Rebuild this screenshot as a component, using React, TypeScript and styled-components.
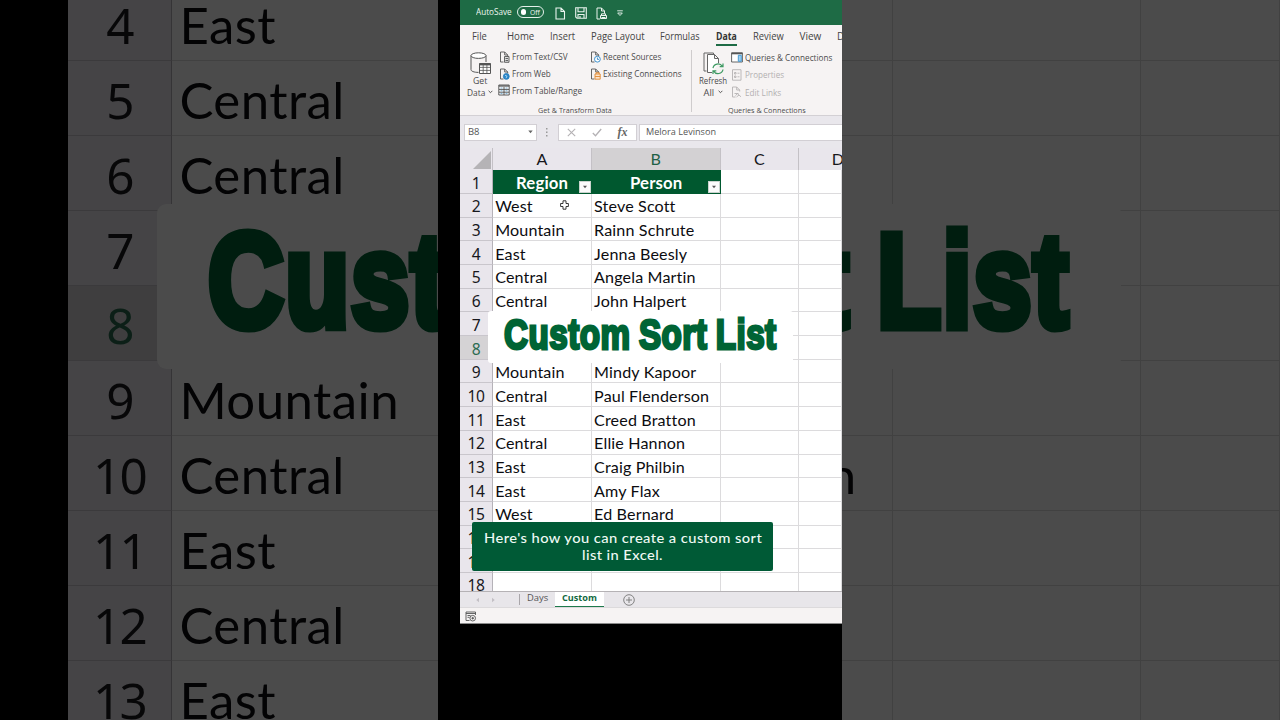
import React, { useLayoutEffect, useRef, useState } from "react";
import styled, { createGlobalStyle, css } from "styled-components";

const GlobalStyle = createGlobalStyle`
  * { box-sizing: border-box; }
  html, body { margin: 0; padding: 0; background: #000; overflow: hidden; }
  svg { display: block; flex: none; }
`;

const UI = `"Open Sans", "Noto Sans", sans-serif`;
const SHEET = `Lato, "Open Sans", sans-serif`;

/* ---------- text fitted to a given width ---------- */

const FitBox = styled.span<{ $w: number }>`
  display: inline-block;
  flex: none;
  width: ${(p) => p.$w}px;
  white-space: nowrap;
  text-align: left;
`;
const FitInner = styled.span`
  display: inline-block;
  transform-origin: 0 50%;
`;

function Fit({ w, children }: { w: number; children: React.ReactNode }) {
  const ref = useRef<HTMLSpanElement>(null);
  const [scale, setScale] = useState(1);
  useLayoutEffect(() => {
    if (ref.current) setScale(w / ref.current.offsetWidth);
  }, [w]);
  return (
    <FitBox $w={w}>
      <FitInner ref={ref} style={{ transform: `scaleX(${scale})` }}>
        {children}
      </FitInner>
    </FitBox>
  );
}

/* ---------- stage ---------- */

const Stage = styled.div`
  display: grid;
  grid-template-columns: 68px 370px 404px 438px;
  grid-template-rows: 720px;
  width: 1280px;
  height: 720px;
  overflow: hidden;
  background: #000;
`;
const Backdrop = styled.div`
  grid-column: 2 / 5;
  grid-row: 1;
  position: relative;
  overflow: hidden;
  opacity: 0.295;
  background: #fff;
`;
const BackdropShift = styled.div`
  margin-top: -14.5px;
`;
const Video = styled.div`
  grid-column: 3;
  grid-row: 1;
  z-index: 1;
  overflow: hidden;
  background: #000;
  padding-left: 22px;
`;
const AppWindow = styled.div`
  position: relative;
  display: flex;
  flex-direction: column;
  width: 382px;
  height: 624px;
  overflow: hidden;
  background: #f6f3f3;
  border-bottom: 1px solid #8a8a8a;
`;

/* ---------- worksheet ---------- */

const Rows = styled.div<{ $k: number }>`
  font-family: ${SHEET};
  font-size: ${(p) => 16.1 * p.$k}px;
  line-height: ${(p) => 22.2 * p.$k}px;
  letter-spacing: 0.009em;
  font-variant-ligatures: none;
  color: #0c0c10;
`;
const Row = styled.div<{ $k: number }>`
  display: grid;
  grid-template-columns: ${(p) => [32.9, 98.9, 128.8, 78.5].map((n) => `${n * p.$k}px`).join(" ")} 1fr;
  grid-template-rows: 100%;
  height: ${(p) => 23.7 * p.$k}px;
  > * { padding-top: ${(p) => 1.4 * p.$k}px; }
`;
const RowHead = styled.div<{ $active: boolean }>`
  text-align: center;
  font-family: "Noto Sans", sans-serif;
  font-size: 0.97em;
  letter-spacing: -0.035em;
  background: ${(p) => (p.$active ? "#d5d3d5" : "#e9e6ec")};
  color: ${(p) => (p.$active ? "#2b6b50" : "#18181c")};
  border-right: 1px solid #b5b2b8;
  border-bottom: 1px solid #c9c6cc;
`;
const Cell = styled.div<{ $k: number }>`
  position: relative;
  padding-left: ${(p) => 2.3 * p.$k}px;
  white-space: nowrap;
  background: #fff;
  border-right: 1px solid #dcdbdd;
  border-bottom: 1px solid #dcdbdd;
`;
const HeadCell = styled(Cell)`
  padding-left: 0;
  text-align: center;
  background: #00582f;
  color: #fff;
  font-weight: 700;
  border-color: #00582f;
`;
const FilterButton = styled.span`
  position: absolute;
  right: 0;
  bottom: 0;
  display: flex;
  align-items: center;
  justify-content: center;
  width: 12px;
  height: 12px;
  background: #fbfbfb;
  border: 1px solid #c9d3cd;
`;

const TitleCard = styled.div<{ $k: number; $top: number }>`
  position: absolute;
  left: ${(p) => 28 * p.$k}px;
  top: ${(p) => p.$top}px;
  width: ${(p) => 305 * p.$k}px;
  height: ${(p) => 52.2 * p.$k}px;
  padding-left: ${(p) => 16.4 * p.$k}px;
  background: #fff;
  border-radius: ${(p) => 3 * p.$k}px;
  color: #006435;
  font-family: "Liberation Sans", Arial, sans-serif;
  font-weight: 700;
  letter-spacing: 0.015em;
  word-spacing: -0.04em;
  font-size: ${(p) => 42.5 * p.$k}px;
  line-height: ${(p) => 48.5 * p.$k}px;
  -webkit-text-stroke: ${(p) => 2.9 * p.$k}px #006435;
`;

const DATA: [string, string][] = [
  ["Region", "Person"],
  ["West", "Steve Scott"],
  ["Mountain", "Rainn Schrute"],
  ["East", "Jenna Beesly"],
  ["Central", "Angela Martin"],
  ["Central", "John Halpert"],
  ["", ""],
  ["", ""],
  ["Mountain", "Mindy Kapoor"],
  ["Central", "Paul Flenderson"],
  ["East", "Creed Bratton"],
  ["Central", "Ellie Hannon"],
  ["East", "Craig Philbin"],
  ["East", "Amy Flax"],
  ["West", "Ed Bernard"],
  ["", ""],
  ["", ""],
  ["", ""],
];

const Arrow = () => (
  <FilterButton>
    <svg width="6" height="4" viewBox="0 0 6 4">
      <path d="M1 .8h4L3 3.2z" fill="#555" />
    </svg>
  </FilterButton>
);

function Worksheet({ k, from, to }: { k: number; from: number; to: number }) {
  return (
    <Rows $k={k}>
      {DATA.slice(from - 1, to).map(([region, person], i) => {
        const n = from + i;
        return (
          <Row key={n} $k={k}>
            <RowHead $active={n === 8}>{n}</RowHead>
            {n === 1 ? (
              <>
                <HeadCell $k={k}><Fit w={52}>{region}</Fit><Arrow /></HeadCell>
                <HeadCell $k={k}><Fit w={52}>{person}</Fit><Arrow /></HeadCell>
              </>
            ) : (
              <>
                <Cell $k={k}>{region}</Cell>
                <Cell $k={k}>{person}</Cell>
              </>
            )}
            <Cell $k={k} />
            <Cell $k={k} />
          </Row>
        );
      })}
    </Rows>
  );
}

function Title({ k, top }: { k: number; top: number }) {
  return (
    <TitleCard $k={k} $top={top}>
      <Fit w={272.5 * k}>Custom Sort List</Fit>
    </TitleCard>
  );
}

/* ---------- title bar ---------- */

const TitleBar = styled.div`
  display: flex;
  align-items: center;
  flex: none;
  height: 25px;
  padding-left: 15.5px;
  background: #1e6b45;
  color: #eef6f1;
  font: 500 9.3px/14px ${UI};
  padding-bottom: 1px;
`;
const Toggle = styled.div`
  display: flex;
  align-items: center;
  gap: 4px;
  width: 27px;
  height: 11.5px;
  margin: 0 11px 0 5px;
  padding-left: 3px;
  border: 1px solid #e4f0ea;
  border-radius: 6px;
  font-size: 7.5px;
  line-height: 9px;
`;
const Knob = styled.span`
  width: 5.5px;
  height: 5.5px;
  border-radius: 50%;
  background: #fff;
`;
const QuickIcons = styled.div`
  display: flex;
  align-items: center;
  gap: 9px;
  padding-top: 2px;
`;

/* ---------- ribbon ---------- */

const Tabs = styled.div`
  display: flex;
  flex: none;
  height: 22px;
  padding-left: 11.5px;
  font: 10px/22px ${UI};
  color: #444;
`;
const Tab = styled.div<{ $gap: number; $active?: boolean }>`
  flex: none;
  height: 20.5px;
  margin-right: ${(p) => p.$gap}px;
  ${(p) =>
    p.$active &&
    css`
      font-weight: 700;
      color: #333;
      border-bottom: 2px solid #1e6b45;
    `}
`;
const Ribbon = styled.div`
  display: flex;
  flex: none;
  height: 69px;
  border-bottom: 1px solid #d3d0d4;
  font: 9.3px/11px ${UI};
  color: #4c4b4c;
`;
const Group = styled.div<{ $w: number }>`
  display: flex;
  flex-direction: column;
  flex: none;
  width: ${(p) => p.$w}px;
`;
const GroupBody = styled.div`
  display: flex;
  height: 57.5px;
`;
const GroupLabel = styled.div<{ $left: number }>`
  padding-left: ${(p) => p.$left}px;
  font-size: 8px;
  line-height: 11px;
`;
const Divider = styled.div`
  width: 1px;
  height: 62px;
  margin-top: 3px;
  background: #cfcccd;
`;
const BigButton = styled.div<{ $w: number }>`
  display: flex;
  flex-direction: column;
  align-items: center;
  flex: none;
  width: ${(p) => p.$w}px;
  padding-top: 5px;
`;
const BigLine = styled.div`
  display: flex;
  align-items: center;
  gap: 3px;
  height: 11.5px;
`;
const Column = styled.div<{ $left?: number; $w: number; $step: number }>`
  display: flex;
  flex-direction: column;
  flex: none;
  width: ${(p) => p.$w}px;
  margin-left: ${(p) => p.$left ?? 0}px;
  padding-top: 1.5px;
  > * { height: ${(p) => p.$step}px; }
`;
const Command = styled.div<{ $off?: boolean; $gap: number; $out?: number }>`
  display: flex;
  align-items: center;
  gap: ${(p) => p.$gap}px;
  margin-left: ${(p) => -(p.$out ?? 0)}px;
  color: ${(p) => (p.$off ? "#b3b0b1" : "inherit")};
`;

const Caret = () => (
  <svg width="5" height="4" viewBox="0 0 5 4">
    <path d="M.6.8 2.5 2.7 4.4.8" fill="none" stroke="#555" strokeWidth="1" />
  </svg>
);

const Page = ({ children, color = "#555" }: { children?: React.ReactNode; color?: string }) => (
  <svg width="11" height="12" viewBox="0 0 11 12" fill="none" stroke={color} strokeWidth=".9">
    <path d="M4.5 11H1.5V1h4.2l3 3v1.5M5.7 1v3h3" />
    {children}
  </svg>
);
const TextIcon = () => (
  <Page>
    <path d="M5.500 5.500h4.500v5.800h-4.500zM6.500 7.500h2.500M6.500 9.500h2.500" fill="#ddd" />
  </Page>
);
const WebIcon = () => (
  <Page>
    <circle cx="7.300" cy="8.400" r="2.900" fill="#2b88c9" stroke="#2b7fc0" />
    <path d="M6 7.200l2 1-1 2" stroke="#d8ecfa" strokeWidth=".7" />
  </Page>
);
const RecentIcon = () => (
  <Page>
    <circle cx="7.400" cy="8.200" r="2.900" fill="#fff" stroke="#2b88c9" />
    <path d="M7.400 6.500v1.900h1.500" stroke="#2b7fc0" />
  </Page>
);
const ExistingIcon = () => (
  <Page>
    <path d="M5 6h5.200v5.200H5zM5 8.500h5.200M6 6V4.700h3.200V6" fill="#fbe3cc" stroke="#e08a34" />
  </Page>
);
const TableIcon = () => (
  <svg width="12" height="12" viewBox="0 0 12 12" fill="none" stroke="#4a4a4a" strokeWidth=".9">
    <path d="M.8 1h10.400v10H.8z" fill="#fff" />
    <path d="M1 2h10" strokeWidth="1.200" />
    <path d="M1 5.400h10M1 8.200h10M6 3v8" />
    <path d="M2.500 4h2M7.500 4h2M2.500 6.800h2M7.500 6.800h2M2.500 9.600h2M7.500 9.600h2" stroke="#6ba3c8" />
  </svg>
);
const DatabaseIcon = () => (
  <svg width="21" height="23" viewBox="0 0 21 23" fill="none" stroke="#555" strokeWidth="1">
    <path d="M1 3.600v14c0 1.600 3 2.800 7.500 2.800M16 3.600V10" />
    <ellipse cx="8.500" cy="3.600" rx="7.500" ry="2.800" fill="#fff" />
    <path d="M9.500 11.500h11v10h-11z" fill="#fff" />
    <path d="M9.500 12.400h11" strokeWidth="2" />
    <path d="M9.500 15.400h11M9.500 18.400h11M13.200 12v9.500M16.900 12v9.500" strokeWidth=".8" />
  </svg>
);
const RefreshIcon = () => (
  <svg width="21" height="23" viewBox="0 0 21 23" fill="none" stroke="#666" strokeWidth="1">
    <path d="M3.500 19H1V1h9.500v1" />
    <path d="M9 20.500H4.500V2.500h7l4 4V11M11.500 2.500v4h4" fill="#fff" />
    <path d="M10 16.200a5 4.800 0 0 1 9.300-1.800M20 11.500v3.200h-3.300M20 17.500a5 4.800 0 0 1-9.300 1.600M10 22v-3.200h3.300" stroke="#3f9a63" strokeWidth="1.200" />
  </svg>
);
const QueriesIcon = () => (
  <svg width="12" height="11" viewBox="0 0 12 11" fill="#fff" stroke="#555" strokeWidth=".9">
    <path d="M.6.800h10.800v9.200H.6z" />
    <path d="M.6 1.500h10.800" strokeWidth="1.600" />
    <path d="M7.300 3.300h3v6h-3z" fill="#9fd0f0" stroke="#3a93cf" />
  </svg>
);
const PropertiesIcon = () => (
  <svg width="12" height="12" viewBox="0 0 12 12" fill="none" stroke="#b5b2b3" strokeWidth=".9">
    <path d="M1.500.7h8.500v10.500H1.500zM3.500 3.500h1.500v1.500H3.500zM3.500 7h1.500v1.500H3.500zM6.500 4.200h2M6.500 7.800h2" />
  </svg>
);
const LinksIcon = () => (
  <Page color="#b5b2b3">
    <path d="M4.500 9.500l2-1.800 1.500 1.400M5.500 11l2.500-2 2 1.800M3.500 7.500h4" />
  </Page>
);

/* ---------- formula bar ---------- */

const FormulaBar = styled.div`
  display: flex;
  align-items: center;
  flex: none;
  height: 32px;
  padding-left: 3.5px;
  background: #e9e7ec;
  color: #555;
  font: 8.6px ${UI};
`;
const Field = styled.div<{ $w: number; $pad: number; $mr: number }>`
  display: flex;
  align-items: center;
  justify-content: space-between;
  flex: none;
  width: ${(p) => p.$w}px;
  height: 17px;
  margin-right: ${(p) => p.$mr}px;
  padding: 0 ${(p) => p.$pad}px;
  background: #fff;
  border: 1px solid #d2cfd4;
`;
const Dots = styled.div`
  display: flex;
  justify-content: center;
  flex: none;
  width: 21px;
`;
const Fx = styled.span`
  font: italic 700 12px/14px "Liberation Serif", serif;
  color: #666;
`;

/* ---------- column header ---------- */

const ColumnHeads = styled.div`
  display: grid;
  grid-template-columns: 32.9px 98.9px 128.8px 78.5px 78.5px;
  flex: none;
  height: 22.3px;
  background: #e9e6ec;
  font: 16.1px/22px ${SHEET};
  color: #18181c;
  text-align: center;
`;
const ColumnHead = styled.div<{ $active?: boolean }>`
  border-right: 1px solid #c4c1c6;
  border-bottom: 1px solid ${(p) => (p.$active ? "#1e6b45" : "#b9b6bb")};
  background: ${(p) => (p.$active ? "#d3d1d3" : "transparent")};
  color: ${(p) => (p.$active ? "#1f6145" : "inherit")};
`;
const Corner = styled(ColumnHead)`
  display: flex;
  align-items: flex-end;
  justify-content: flex-end;
  padding: 0 1px 1px 0;
`;
const SheetArea = styled.div`
  flex: none;
  height: 421px;
  overflow: hidden;
`;

/* ---------- bottom ---------- */

const SheetTabs = styled.div`
  display: flex;
  flex: none;
  height: 17px;
  background: #e8e6ea;
  border-top: 1px solid #b5b2b5;
  border-bottom: 1px solid #dcdadc;
  font: 9.4px/12px ${UI};
  color: #555;
`;
const NavArrows = styled.div`
  display: flex;
  align-items: center;
  width: 60px;
  padding-left: 15px;
  border-right: 1px solid #a9a6aa;
  margin: 2px 0;
`;
const SheetTab = styled.div<{ $active?: boolean }>`
  padding: 0 7px;
  height: 15px;
  ${(p) =>
    p.$active &&
    css`
      background: #fff;
      color: #12693f;
      font-weight: 700;
      border-bottom: 1.5px solid #1e7a4c;
    `}
`;
const AddSheet = styled.div`
  padding: 2px 0 0 18.5px;
`;
const StatusBar = styled.div`
  flex: 1;
  padding: 2.5px 0 0 5px;
  background: #f6f3f3;
`;

const Caption = styled.div`
  position: absolute;
  left: 12px;
  top: 522px;
  width: 301px;
  height: 49px;
  padding-top: 8px;
  background: #005a36;
  border-radius: 2px;
  color: #f0faf5;
  text-align: center;
  font: 500 13px/16.5px Lato, sans-serif;
  letter-spacing: 0.03em;
`;
const CaptionLine = styled.div`
  height: 16.5px;
`;
const Pointer = styled.svg`
  position: absolute;
  left: 100px;
  top: 200px;
`;

function ExcelWindow() {
  return (
    <AppWindow>
      <TitleBar>
        <Fit w={36}>AutoSave</Fit>
        <Toggle><Knob /><Fit w={10}>Off</Fit></Toggle>
        <QuickIcons>
          <svg width="11" height="13" viewBox="0 0 11 13" fill="none" stroke="#eaf4ee" strokeWidth="1.100">
            <path d="M1 1h5l3.500 3.500V12H1zM6 1v3.500h3.500" />
          </svg>
          <svg width="12" height="12" viewBox="0 0 12 12" fill="none" stroke="#eaf4ee" strokeWidth="1.100">
            <path d="M.7.700h10.600v10.600H2L.7 10zM3 .7v4h6v-4M3 11V7.500h6V11M5 9v2" />
          </svg>
          <svg width="11" height="13" viewBox="0 0 11 13" fill="none" stroke="#eaf4ee" strokeWidth="1">
            <path d="M4 12H1V1h4.500l3 3v2.500M5.500 1v3h3" />
            <path d="M4.500 8.500h6v3h-6zM5.500 8.500V6.800h4v1.700M5.500 10.500h4" />
          </svg>
          <svg width="8" height="7" viewBox="0 0 8 7" fill="none" stroke="#eaf4ee" strokeWidth=".9">
            <path d="M1.200 .8h5.600M1.700 3h4.600L4 5.500z" />
          </svg>
        </QuickIcons>
      </TitleBar>

      <Tabs>
        <Tab $gap={20}><Fit w={15}>File</Fit></Tab>
        <Tab $gap={16}><Fit w={27}>Home</Fit></Tab>
        <Tab $gap={16}><Fit w={25}>Insert</Fit></Tab>
        <Tab $gap={15.500}><Fit w={54}>Page Layout</Fit></Tab>
        <Tab $gap={16}><Fit w={40}>Formulas</Fit></Tab>
        <Tab $gap={15.500} $active><Fit w={21}>Data</Fit></Tab>
        <Tab $gap={16}><Fit w={31}>Review</Fit></Tab>
        <Tab $gap={15.500}><Fit w={22}>View</Fit></Tab>
        <Tab $gap={0}>D</Tab>
      </Tabs>

      <Ribbon>
        <Group $w={231}>
          <GroupBody>
            <BigButton $w={40}>
              <DatabaseIcon />
              <BigLine><Fit w={14}>Get</Fit></BigLine>
              <BigLine><Fit w={18}>Data</Fit><Caret /></BigLine>
            </BigButton>
            <Column $left={-1.5} $w={91} $step={16.700}>
              <Command $gap={2}><TextIcon /><Fit w={56}>From Text/CSV</Fit></Command>
              <Command $gap={2}><WebIcon /><Fit w={39}>From Web</Fit></Command>
              <Command $gap={2} $out={1}><TableIcon /><Fit w={70}>From Table/Range</Fit></Command>
            </Column>
            <Column $w={98} $step={16.700}>
              <Command $gap={2}><RecentIcon /><Fit w={58}>Recent Sources</Fit></Command>
              <Command $gap={2}><ExistingIcon /><Fit w={79}>Existing Connections</Fit></Command>
            </Column>
          </GroupBody>
          <GroupLabel $left={78}><Fit w={74}>Get &amp; Transform Data</Fit></GroupLabel>
        </Group>
        <Divider />
        <Group $w={150}>
          <GroupBody>
            <BigButton $w={42}>
              <RefreshIcon />
              <BigLine><Fit w={28}>Refresh</Fit></BigLine>
              <BigLine><Fit w={11}>All</Fit><Caret /></BigLine>
            </BigButton>
            <Column $left={-3} $w={110} $step={17.500}>
              <Command $gap={2}><QueriesIcon /><Fit w={87}>Queries &amp; Connections</Fit></Command>
              <Command $gap={2} $off><PropertiesIcon /><Fit w={39}>Properties</Fit></Command>
              <Command $gap={3} $off><LinksIcon /><Fit w={36}>Edit Links</Fit></Command>
            </Column>
          </GroupBody>
          <GroupLabel $left={36}><Fit w={78}>Queries &amp; Connections</Fit></GroupLabel>
        </Group>
      </Ribbon>

      <FormulaBar>
        <Field $w={73} $pad={3} $mr={0}>
          <Fit w={11}>B8</Fit>
          <svg width="5" height="4" viewBox="0 0 5 4"><path d="M.3.600h4.400L2.500 3.200z" fill="#666" /></svg>
        </Field>
        <Dots>
          <svg width="2" height="9" viewBox="0 0 2 9" fill="#999">
            <path d="M0 0h1.500v1.500H0zM0 3.500h1.500v1.500H0zM0 7h1.500v1.500H0z" />
          </svg>
        </Dots>
        <Field $w={79} $pad={8} $mr={2}>
          <svg width="9" height="9" viewBox="0 0 9 9" fill="none" stroke="#b4b1b4" strokeWidth="1.100"><path d="M.8.800l7.400 7.400M8.200.8L.8 8.200" /></svg>
          <svg width="10" height="9" viewBox="0 0 10 9" fill="none" stroke="#b4b1b4" strokeWidth="1.300"><path d="M.8 5l2.700 2.700L9.200 1" /></svg>
          <Fx>fx</Fx>
        </Field>
        <Field $w={210} $pad={6.500} $mr={0}><Fit w={70}>Melora Levinson</Fit></Field>
      </FormulaBar>

      <ColumnHeads>
        <Corner>
          <svg width="18" height="18" viewBox="0 0 18 18"><path d="M18 0v18H0z" fill="#b5b3b6" /></svg>
        </Corner>
        <ColumnHead>A</ColumnHead>
        <ColumnHead $active>B</ColumnHead>
        <ColumnHead>C</ColumnHead>
        <ColumnHead>D</ColumnHead>
      </ColumnHeads>
      <SheetArea>
        <Worksheet k={1} from={1} to={18} />
      </SheetArea>

      <SheetTabs>
        <NavArrows>
          <svg width="24" height="6" viewBox="0 0 24 6" fill="#c3c0c5"><path d="M4 .8v4.400L1.200 3zM17 .8v4.400L19.800 3z" /></svg>
        </NavArrows>
        <SheetTab><Fit w={21}>Days</Fit></SheetTab>
        <SheetTab $active><Fit w={35}>Custom</Fit></SheetTab>
        <AddSheet>
          <svg width="12" height="12" viewBox="0 0 12 12" fill="none" stroke="#777" strokeWidth=".9">
            <circle cx="6" cy="6" r="5.300" /><path d="M6 3v6M3 6h6" />
          </svg>
        </AddSheet>
      </SheetTabs>
      <StatusBar>
        <svg width="12" height="11" viewBox="0 0 12 11" fill="none" stroke="#555" strokeWidth=".9">
          <path d="M4.500 9.500H1V1h9.500v3M1 2.500h9.500M2.500 4.500h3M2.500 6.300h2" />
          <circle cx="7.700" cy="7.200" r="2.800" /><circle cx="7.700" cy="7.200" r=".8" fill="#555" />
        </svg>
      </StatusBar>

      <Title k={1} top={310.700} />
      <Pointer width="9" height="10" viewBox="0 0 9 10">
        <path d="M3 .8h3v2.700h2.400v3H6v2.700H3V6.500H.6v-3H3z" fill="#fff" stroke="#222" strokeWidth=".9" />
      </Pointer>
      <Caption>
        <CaptionLine><Fit w={278}>Here's how you can create a custom sort</Fit></CaptionLine>
        <CaptionLine><Fit w={81}>list in Excel.</Fit></CaptionLine>
      </Caption>
    </AppWindow>
  );
}

export default function App() {
  return (
    <>
      <GlobalStyle />
      <Stage>
        <Backdrop>
          <BackdropShift>
            <Worksheet k={3.165} from={4} to={13} />
          </BackdropShift>
          <Title k={3.162} top={204} />
        </Backdrop>
        <Video>
          <ExcelWindow />
        </Video>
      </Stage>
    </>
  );
}
